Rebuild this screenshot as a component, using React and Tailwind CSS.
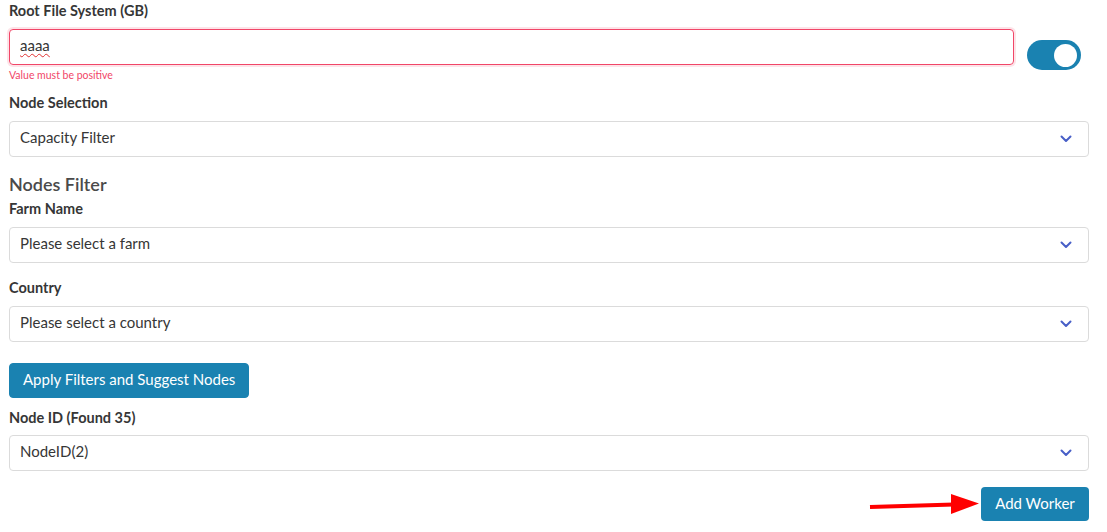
import React from 'react';

// Bulma-like form for adding a worker node

function Chevron() {
  return (
    <svg width="12" height="8" viewBox="0 0 12 8" className="shrink-0">
      <polyline points="1.5,1.5 6,6 10.5,1.5" fill="none" stroke="#485fc7" strokeWidth="2" strokeLinecap="round" strokeLinejoin="round" />
    </svg>
  );
}

function SelectBox({ value, className = '' }) {
  return (
    <div className={`h-[36px] flex items-center justify-between pl-[10px] pr-[16px] bg-white border border-[#dbdbdb] rounded-[4px] text-[15px] text-[#363636] ${className}`}>
      <span className="pb-[3px]">{value}</span>
      <Chevron />
    </div>
  );
}

function Label({ children, className = '' }) {
  return (
    <div className={`h-[24px] leading-[24px] text-[14.5px] font-bold text-[#363636] ${className}`}>
      {children}
    </div>
  );
}

function Arrow() {
  return (
    <svg width="112" height="24" viewBox="0 0 112 24" className="shrink-0">
      <line x1="2" y1="15" x2="86" y2="12.5" stroke="#f00" strokeWidth="4" />
      <polygon points="83,2 111,11.5 83,22" fill="#f00" />
    </svg>
  );
}

export default function App() {
  return (
    <div className="min-h-screen bg-white pl-[9px] pr-[18px]" style={{ fontFamily: 'Lato, "Liberation Sans", sans-serif' }}>
      <Label className="-mt-[1px]">Root File System (GB)</Label>

      <div className="flex items-start mt-[6px]">
        <div className="flex-1">
          <div className="h-[36px] flex items-center pl-[10px] border border-[#f14668] rounded-[4px] shadow-[0_0_0_2px_rgba(241,70,104,0.15)] text-[15px] text-[#363636]">
            <span className="pb-[3px] underline decoration-wavy decoration-[#e03030] decoration-1 underline-offset-2">aaaa</span>
          </div>
          <div className="h-[16px] leading-[16px] mt-[2px] text-[10.5px] text-[#f14668]">Value must be positive</div>
        </div>
        <div className="w-[54px] h-[30px] ml-[13px] mr-[8px] mt-[11px] rounded-full bg-[#1a82b1] flex items-center justify-end pr-[4px]">
          <div className="w-[23px] h-[23px] rounded-full bg-white" />
        </div>
      </div>

      <Label className="mt-[8px]">Node Selection</Label>
      <SelectBox value="Capacity Filter" className="mt-[6px]" />

      <div className="h-[28px] leading-[28px] mt-[13px] text-[18px] font-semibold text-[#4a4a4a]">Nodes Filter</div>
      <Label className="-mt-[1px]">Farm Name</Label>
      <SelectBox value="Please select a farm" className="mt-[6px]" />

      <Label className="mt-[13px]">Country</Label>
      <SelectBox value="Please select a country" className="mt-[6px]" />

      <button className="mt-[21px] h-[35px] px-[13px] pb-[2px] rounded-[4px] bg-[#1a82b1] text-white text-[15px] border border-[#1a82b1]">
        Apply Filters and Suggest Nodes
      </button>

      <Label className="mt-[8px]">Node ID (Found 35)</Label>
      <SelectBox value="NodeID(2)" className="mt-[5px]" />

      <div className="flex justify-end items-center mt-[16px]">
        <Arrow />
        <button className="ml-[1px] h-[34px] w-[108px] pb-[2px] rounded-[4px] bg-[#1a82b1] text-white text-[15px]">
          Add Worker
        </button>
      </div>
    </div>
  );
}
